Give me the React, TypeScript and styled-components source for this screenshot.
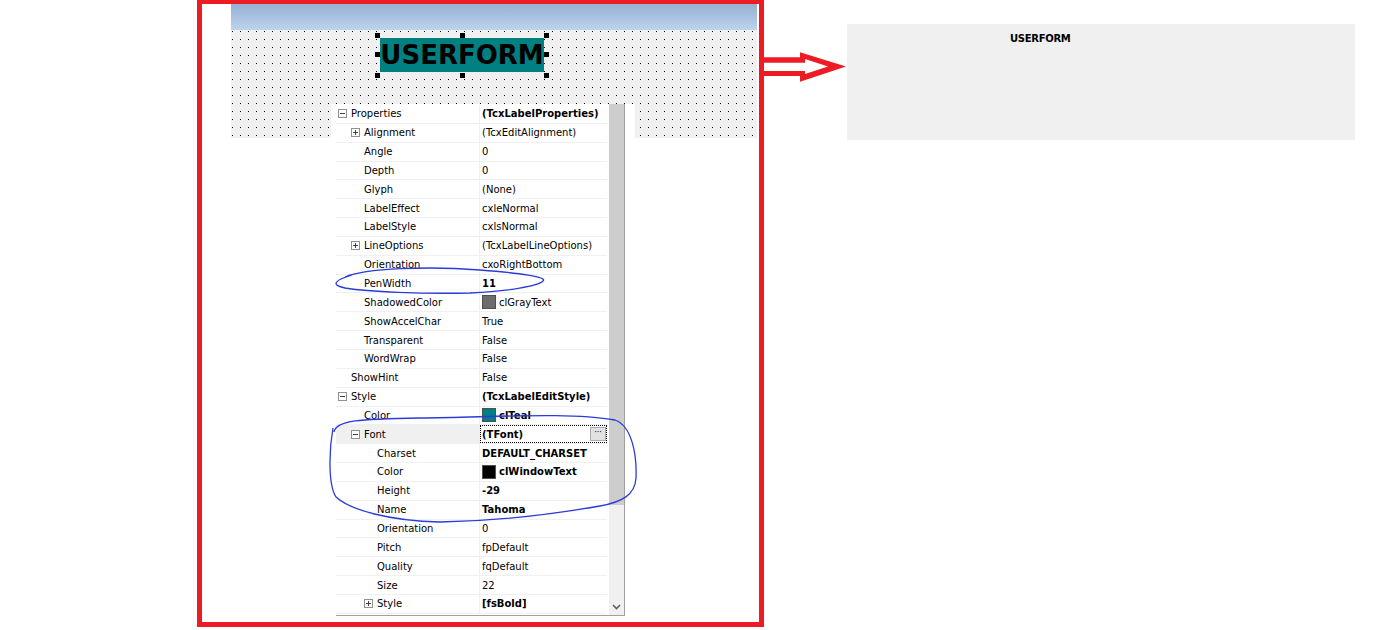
import React from 'react';
import styled, { createGlobalStyle } from 'styled-components';

const uiFont = '"DejaVu Sans", Verdana, sans-serif';

const GlobalStyle = createGlobalStyle`
  html, body { margin: 0; padding: 0; background: #fff; }
  body { width: 1384px; height: 630px; overflow: hidden; font-family: ${uiFont}; color: #000; }
  * { box-sizing: border-box; }
`;

const Page = styled.div`
  position: relative;
  display: flex;
  align-items: flex-start;
  width: 1384px;
  height: 630px;
  padding-left: 197px;
`;

const Frame = styled.div`
  position: relative;
  flex: none;
  width: 567px;
  height: 627px;
  border: 5px solid #ed1c24;
  border-top-width: 4px;
  padding-left: 29px;
`;

const DesignForm = styled.div`
  width: 526px;
  display: flex;
  flex-direction: column;
`;

const TitleBar = styled.div`
  height: 26px;
  background: linear-gradient(#95afd3, #bed4ec);
`;

const Canvas = styled.div`
  position: relative;
  height: 108px;
  background-color: #f0f0f0;
  background-image: conic-gradient(from 270deg at 1px 1px, #000 90deg, transparent 0);
  background-size: 8px 8px;
  background-position: 1px 1px;
`;

const LabelBox = styled.div`
  position: absolute;
  left: 149px;
  top: 8px;
  width: 164px;
  height: 34px;
  background: #008080;
  display: flex;
  align-items: center;
  justify-content: center;
  font: bold 26px ${uiFont};
  color: #000;
`;

const Handle = styled.span<{ $x: number; $y: number }>`
  position: absolute;
  width: 5px;
  height: 5px;
  background: #000;
  left: ${(p) => p.$x}px;
  top: ${(p) => p.$y}px;
`;

const GridOverlay = styled.div`
  position: absolute;
  left: 129px;
  top: 100px;
  width: 304px;
  height: 512px;
  background: #fff;
  padding: 0 10px 0 5px;
`;

const Grid = styled.div`
  display: flex;
  height: 512px;
  border-right: 1px solid #a0a0a0;
  border-bottom: 1px solid #a0a0a0;
  font-size: 10px;
`;

const Rows = styled.div`
  flex: none;
  width: 271px;
  margin-right: 2px;
  padding-top: 1px;
  overflow: hidden;
`;

const Row = styled.div`
  display: flex;
  height: 18.85px;
  border-bottom: 1px solid #f0f0f0;
`;

const NameCell = styled.div<{ $level: number; $selected?: boolean }>`
  flex: none;
  width: 144px;
  display: flex;
  align-items: center;
  gap: 4px;
  padding-left: ${(p) => 2 + p.$level * 13}px;
  border-right: 1px solid #f0f0f0;
  background: ${(p) => (p.$selected ? '#f0f0f0' : '#fff')};
  white-space: nowrap;
`;

const ValueCell = styled.div<{ $bold?: boolean; $selected?: boolean }>`
  flex: 1;
  min-width: 0;
  display: flex;
  align-items: center;
  padding-left: ${(p) => (p.$selected ? 1 : 2)}px;
  font-weight: ${(p) => (p.$bold ? 'bold' : 'normal')};
  border: ${(p) => (p.$selected ? '1px dotted #000' : 'none')};
  white-space: nowrap;
`;

const Spacer = styled.span`
  flex: none;
  width: 9px;
`;

const Swatch = styled.span<{ $color: string }>`
  flex: none;
  width: 14px;
  height: 14px;
  margin-right: 3px;
  background: ${(p) => p.$color};
  border: 1px solid #505050;
`;

const EllipsisButton = styled.span`
  margin-left: auto;
  margin-right: 0;
  width: 16px;
  height: 14px;
  background: #e1e1e1;
  border: 1px solid #adadad;
  display: flex;
  align-items: center;
  justify-content: center;
  font-size: 8px;
  font-weight: normal;
  line-height: 1;
  color: #000;
  padding-bottom: 2px;
`;

const ScrollBar = styled.div`
  flex: none;
  width: 15px;
  background: #f0f0f0;
  display: flex;
  flex-direction: column;
`;

const Thumb = styled.div`
  height: 401px;
  background: #cdcdcd;
`;

const ScrollArrow = styled.svg`
  display: block;
  margin-top: auto;
`;

const Arrow = styled.svg`
  flex: none;
  display: block;
`;

const PreviewPanel = styled.div`
  flex: none;
  margin-top: 24px;
  width: 508px;
  height: 116px;
  background: #f0f0f0;
  padding: 9px 0 0 163px;
`;

const PreviewLabel = styled.div`
  font: bold 10px ${uiFont};
  line-height: 12px;
  letter-spacing: -0.3px;
  color: #000;
`;

const Annotations = styled.svg`
  position: absolute;
  left: 0;
  top: 0;
  pointer-events: none;
`;

type Prop = {
  level: number;
  name: string;
  value: string;
  box?: 'plus' | 'minus';
  bold?: boolean;
  swatch?: string;
  selected?: boolean;
};

const props: Prop[] = [
  { level: 0, box: 'minus', name: 'Properties', value: '(TcxLabelProperties)', bold: true },
  { level: 1, box: 'plus', name: 'Alignment', value: '(TcxEditAlignment)' },
  { level: 1, name: 'Angle', value: '0' },
  { level: 1, name: 'Depth', value: '0' },
  { level: 1, name: 'Glyph', value: '(None)' },
  { level: 1, name: 'LabelEffect', value: 'cxleNormal' },
  { level: 1, name: 'LabelStyle', value: 'cxlsNormal' },
  { level: 1, box: 'plus', name: 'LineOptions', value: '(TcxLabelLineOptions)' },
  { level: 1, name: 'Orientation', value: 'cxoRightBottom' },
  { level: 1, name: 'PenWidth', value: '11', bold: true },
  { level: 1, name: 'ShadowedColor', value: 'clGrayText', swatch: '#6d6d6d' },
  { level: 1, name: 'ShowAccelChar', value: 'True' },
  { level: 1, name: 'Transparent', value: 'False' },
  { level: 1, name: 'WordWrap', value: 'False' },
  { level: 0, name: 'ShowHint', value: 'False' },
  { level: 0, box: 'minus', name: 'Style', value: '(TcxLabelEditStyle)', bold: true },
  { level: 1, name: 'Color', value: 'clTeal', bold: true, swatch: '#008080' },
  { level: 1, box: 'minus', name: 'Font', value: '(TFont)', bold: true, selected: true },
  { level: 2, name: 'Charset', value: 'DEFAULT_CHARSET', bold: true },
  { level: 2, name: 'Color', value: 'clWindowText', bold: true, swatch: '#000000' },
  { level: 2, name: 'Height', value: '-29', bold: true },
  { level: 2, name: 'Name', value: 'Tahoma', bold: true },
  { level: 2, name: 'Orientation', value: '0' },
  { level: 2, name: 'Pitch', value: 'fpDefault' },
  { level: 2, name: 'Quality', value: 'fqDefault' },
  { level: 2, name: 'Size', value: '22' },
  { level: 2, box: 'plus', name: 'Style', value: '[fsBold]', bold: true },
];

const ExpandBox = ({ kind }: { kind: 'plus' | 'minus' }) => (
  <svg width="9" height="9" viewBox="0 0 9 9" style={{ flex: 'none', display: 'block' }}>
    <rect x="0.5" y="0.5" width="8" height="8" fill="#fff" stroke="#919191" />
    <path d="M2 4.5h5" stroke="#404040" />
    {kind === 'plus' && <path d="M4.5 2v5" stroke="#404040" />}
  </svg>
);

const handles: [number, number][] = [
  [-5, -5], [80, -5], [164, -5],
  [-5, 14], [164, 14],
  [-5, 35], [80, 35], [164, 35],
];

export default function App() {
  return (
    <>
      <GlobalStyle />
      <Page>
        <Frame>
          <DesignForm>
            <TitleBar />
            <Canvas>
              <LabelBox>
                USERFORM
                {handles.map(([x, y], i) => (
                  <Handle key={i} $x={x} $y={y} />
                ))}
              </LabelBox>
            </Canvas>
          </DesignForm>
          <GridOverlay>
            <Grid>
              <Rows>
                {props.map((p, i) => (
                  <Row key={i}>
                    <NameCell $level={p.level} $selected={p.selected}>
                      {p.box ? <ExpandBox kind={p.box} /> : <Spacer />}
                      <span>{p.name}</span>
                    </NameCell>
                    <ValueCell $bold={p.bold} $selected={p.selected}>
                      {p.swatch && <Swatch $color={p.swatch} />}
                      <span>{p.value}</span>
                      {p.selected && <EllipsisButton>···</EllipsisButton>}
                    </ValueCell>
                  </Row>
                ))}
              </Rows>
              <ScrollBar>
                <Thumb />
                <ScrollArrow width="15" height="16" viewBox="0 0 15 16">
                  <path d="M4 6 L7.5 9.5 L11 6" fill="none" stroke="#606060" strokeWidth="1.6" />
                </ScrollArrow>
              </ScrollBar>
            </Grid>
          </GridOverlay>
        </Frame>
        <Arrow width="83" height="90" viewBox="764 0 83 90">
          <path
            fill="#ed1c24"
            fillRule="evenodd"
            d="M763 57.3H800V52.3L846 66.5L800 81.7V76H763Z M763 62.7H805V59L828 66.5L805 74V71H763Z"
          />
        </Arrow>
        <PreviewPanel>
          <PreviewLabel>USERFORM</PreviewLabel>
        </PreviewPanel>
        <Annotations width="1384" height="630" viewBox="0 0 1384 630">
          <path
            d="M345 277 C365 268, 430 266, 480 270 C520 273, 548 277, 543 281 C538 286, 510 291, 470 293 C420 294, 370 292, 345 288 C330 285, 335 280, 352 275"
            fill="none"
            stroke="#2b3bd9"
            strokeWidth="1.3"
          />
          <path
            d="M334 432 C336 420, 360 419, 420 418 C500 417, 570 412, 615 420 C632 426, 637 455, 636 478 C635 495, 622 502, 600 506 C560 513, 500 521, 440 522 C390 521, 350 510, 336 497 C328 485, 329 450, 333 428"
            fill="none"
            stroke="#2b3bd9"
            strokeWidth="1.3"
          />
        </Annotations>
      </Page>
    </>
  );
}
